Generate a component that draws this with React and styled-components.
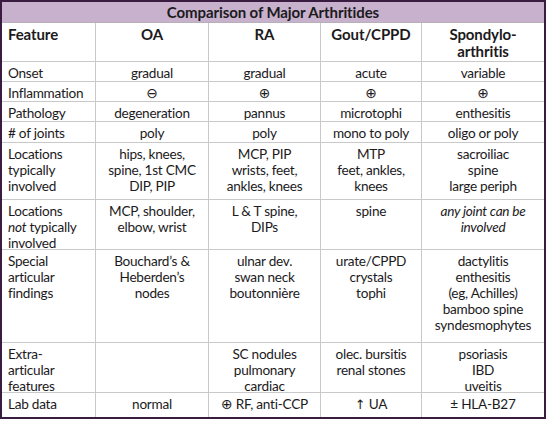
import React from "react";
import styled, { createGlobalStyle } from "styled-components";

const Global = createGlobalStyle`
  html, body { margin: 0; padding: 0; background: #ffffff; }
  body { font-family: "Lato", "DejaVu Sans", sans-serif; color: #1c1a1c; }
`;

const Frame = styled.div`
  width: 546px;
  box-sizing: border-box;
  border: 2px solid #3a1c40;
`;

const TitleBar = styled.div`
  height: 21px;
  box-sizing: border-box;
  background: #c7b1cd;
  border-bottom: 1px solid #b8b0b8;
  display: flex;
  align-items: center;
  justify-content: center;
  font-weight: 700;
  font-size: 15px;
  letter-spacing: -0.1px;
`;

const Grid = styled.div`
  display: grid;
  grid-template-columns: 94px 113px 112px 101px 122px;
  grid-template-rows: ${(p) => p.$rows};
`;

const Cell = styled.div`
  box-sizing: border-box;
  border-right: ${(p) => (p.$last ? "none" : "1px solid #c9c9c9")};
  border-bottom: ${(p) => (p.$bottom ? "none" : "1px solid #c9c9c9")};
  padding: 3px 3px 0;
  padding-left: ${(p) => (p.$label ? "6px" : "3px")};
  text-align: ${(p) => (p.$label ? "left" : "center")};
  font-size: ${(p) => (p.$head ? "15px" : "13.6px")};
  letter-spacing: ${(p) => (p.$head ? "-0.1px" : "-0.25px")};
  font-weight: ${(p) => (p.$head ? 700 : 400)};
  line-height: ${(p) => (p.$head ? "17px" : "16px")};
  white-space: nowrap;
`;

const Line = styled.div`
  font-style: ${(p) => (p.$italic ? "italic" : "normal")};
`;

const Sym = styled.span`
  font-family: "DejaVu Sans", sans-serif;
  font-size: ${(p) => p.$size || "14px"};
  line-height: 16px;
  color: #1c1a1c;
`;

const header = ["Feature", "OA", "RA", "Gout/CPPD", ["Spondylo-", "arthritis"]];

const rows = [
  { label: ["Onset"], h: 20, cells: [["gradual"], ["gradual"], ["acute"], ["variable"]] },
  {
    label: ["Inflammation"],
    h: 20,
    cells: [[<Sym>⊖</Sym>], [<Sym>⊕</Sym>], [<Sym>⊕</Sym>], [<Sym>⊕</Sym>]],
  },
  { label: ["Pathology"], h: 20, cells: [["degeneration"], ["pannus"], ["microtophi"], ["enthesitis"]] },
  { label: ["# of joints"], h: 21, cells: [["poly"], ["poly"], ["mono to poly"], ["oligo or poly"]] },
  {
    label: ["Locations", "typically", "involved"],
    h: 57,
    cells: [
      ["hips, knees,", "spine, 1st CMC", "DIP, PIP"],
      ["MCP, PIP", "wrists, feet,", "ankles, knees"],
      ["MTP", "feet, ankles,", "knees"],
      ["sacroiliac", "spine", "large periph"],
    ],
  },
  {
    label: [
      "Locations",
      <>
        <i>not</i> typically
      </>,
      "involved",
    ],
    h: 50,
    cells: [
      ["MCP, shoulder,", "elbow, wrist"],
      ["L & T spine,", "DIPs"],
      ["spine"],
      [{ i: "any joint can be" }, { i: "involved" }],
    ],
  },
  {
    label: ["Special", "articular", "findings"],
    h: 93,
    cells: [
      ["Bouchard’s &", "Heberden’s", "nodes"],
      ["ulnar dev.", "swan neck", "boutonnière"],
      ["urate/CPPD", "crystals", "tophi"],
      ["dactylitis", "enthesitis", "(eg, Achilles)", "bamboo spine", "syndesmophytes"],
    ],
  },
  {
    label: ["Extra-", "articular", "features"],
    h: 50,
    cells: [[], ["SC nodules", "pulmonary", "cardiac"], ["olec. bursitis", "renal stones"], ["psoriasis", "IBD", "uveitis"]],
  },
  {
    label: ["Lab data"],
    h: 24,
    cells: [
      ["normal"],
      [
        <>
          <Sym>⊕</Sym> RF, anti-CCP
        </>,
      ],
      [
        <>
          <Sym $size="13px">↑</Sym> UA
        </>,
      ],
      ["± HLA-B27"],
    ],
  },
];

function Lines({ items }) {
  return items.map((t, k) =>
    t && typeof t === "object" && "i" in t ? (
      <Line key={k} $italic>
        {t.i}
      </Line>
    ) : (
      <Line key={k}>{t}</Line>
    )
  );
}

export default function App() {
  const rowTemplate = ["39px", ...rows.map((r) => `${r.h}px`)].join(" ");
  return (
    <>
      <Global />
      <Frame>
        <TitleBar>Comparison of Major Arthritides</TitleBar>
        <Grid $rows={rowTemplate}>
          {header.map((h, i) => (
            <Cell key={`h${i}`} $head $label={i === 0} $last={i === 4}>
              <Lines items={Array.isArray(h) ? h : [h]} />
            </Cell>
          ))}
          {rows.map((r, ri) => {
            const bottom = ri === rows.length - 1;
            return (
              <React.Fragment key={ri}>
                <Cell $label $bottom={bottom}>
                  <Lines items={r.label} />
                </Cell>
                {r.cells.map((c, ci) => (
                  <Cell key={ci} $bottom={bottom} $last={ci === 3}>
                    <Lines items={c} />
                  </Cell>
                ))}
              </React.Fragment>
            );
          })}
        </Grid>
      </Frame>
    </>
  );
}
